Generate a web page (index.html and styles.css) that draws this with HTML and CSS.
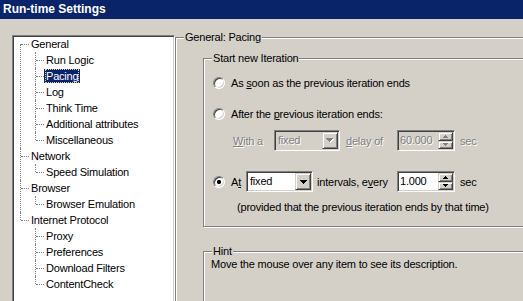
FILE: index.html
```html
<!DOCTYPE html>
<html lang="en">
<head>
    <meta charset="UTF-8">
    <meta name="viewport" content="width=device-width, initial-scale=1.0">
    <title>Run-time Settings</title>
    <link rel="stylesheet" href="styles.css">
</head>
<body>
    <div class="window">
        <div class="titlebar">Run-time Settings</div>

        <div class="client">
            <!-- Settings tree -->
            <ul class="tree">
                <li><span class="node">General</span>
                    <ul>
                        <li><span class="node">Run Logic</span></li>
                        <li><span class="node selected">Pacing</span></li>
                        <li><span class="node">Log</span></li>
                        <li><span class="node">Think Time</span></li>
                        <li><span class="node">Additional attributes</span></li>
                        <li><span class="node">Miscellaneous</span></li>
                    </ul>
                </li>
                <li><span class="node">Network</span>
                    <ul>
                        <li><span class="node">Speed Simulation</span></li>
                    </ul>
                </li>
                <li><span class="node">Browser</span>
                    <ul>
                        <li><span class="node">Browser Emulation</span></li>
                    </ul>
                </li>
                <li><span class="node">Internet Protocol</span>
                    <ul>
                        <li><span class="node">Proxy</span></li>
                        <li><span class="node">Preferences</span></li>
                        <li><span class="node">Download Filters</span></li>
                        <li><span class="node">ContentCheck</span></li>
                    </ul>
                </li>
            </ul>

            <!-- Pacing page -->
            <div class="group main-group">
                <div class="group-title">General: Pacing</div>

                <div class="group iter-group">
                    <div class="group-title">Start new Iteration</div>

                    <div class="row row-soon">
                        <span class="radio"></span>
                        <span>As <u>s</u>oon as the previous iteration ends</span>
                    </div>

                    <div class="row row-after">
                        <span class="radio"></span>
                        <span>After the <u>p</u>revious iteration ends:</span>
                    </div>

                    <div class="row row-delay disabled">
                        <span class="lbl-witha"><u>W</u>ith a</span>
                        <span class="combo combo-delay">
                            <span class="combo-text">fixed</span>
                            <span class="drop">
                                <svg width="8" height="5" viewBox="0 0 8 5"><path class="arrow-shadow" d="M1 1h7v1h-1v1h-1v1h-1v1h-1v-1h-1v-1h-1v-1h-1z"/><path class="arrow" d="M0 0h7v1h-1v1h-1v1h-1v1h-1v-1h-1v-1h-1v-1h-1z"/></svg>
                            </span>
                        </span>
                        <span class="lbl-delay"><u>d</u>elay of</span>
                        <span class="spin">
                            <span class="spin-text">60.000</span>
                            <span class="spin-btns">
                                <span class="spin-btn"><svg width="5" height="3" viewBox="0 0 5 3"><path class="arrow" d="M2 0h1v1h1v1h1v1h-5v-1h1v-1h1z"/></svg></span>
                                <span class="spin-btn"><svg width="5" height="3" viewBox="0 0 5 3"><path class="arrow" d="M0 0h5v1h-1v1h-1v1h-1v-1h-1v-1h-1z"/></svg></span>
                            </span>
                        </span>
                        <span class="lbl-sec">sec</span>
                    </div>

                    <div class="row row-at">
                        <span class="radio checked"></span>
                        <span class="lbl-at">A<u>t</u></span>
                        <span class="combo combo-at">
                            <span class="combo-text">fixed</span>
                            <span class="drop">
                                <svg width="7" height="4" viewBox="0 0 7 4"><path class="arrow" d="M0 0h7v1h-1v1h-1v1h-1v1h-1v-1h-1v-1h-1v-1h-1z"/></svg>
                            </span>
                        </span>
                        <span class="lbl-every">intervals, e<u>v</u>ery</span>
                        <span class="spin">
                            <span class="spin-text">1.000</span>
                            <span class="spin-btns">
                                <span class="spin-btn"><svg width="5" height="3" viewBox="0 0 5 3"><path class="arrow" d="M2 0h1v1h1v1h1v1h-5v-1h1v-1h1z"/></svg></span>
                                <span class="spin-btn"><svg width="5" height="3" viewBox="0 0 5 3"><path class="arrow" d="M0 0h5v1h-1v1h-1v1h-1v-1h-1v-1h-1z"/></svg></span>
                            </span>
                        </span>
                        <span class="lbl-sec">sec</span>
                    </div>

                    <div class="row row-note">(provided that the previous iteration ends by that time)</div>
                </div>

                <div class="group hint-group">
                    <div class="group-title">Hint</div>
                    <div class="hint-text">Move the mouse over any item to see its description.</div>
                </div>
            </div>
        </div>
    </div>
</body>
</html>
```

FILE: styles.css
```css
body {
    margin: 0;
    background-color: #d4d0c8;
    font-family: "Liberation Sans", Arial, sans-serif;
    font-size: 11px;
    letter-spacing: -0.2px;
    color: #000;
    overflow: hidden;
}
.window {
    width: 523px;
    height: 301px;
    overflow: hidden;
}
.titlebar {
    height: 19px;
    line-height: 19px;
    padding-left: 3px;
    background-color: #0a246a;
    color: #fff;
    font-weight: bold;
    font-size: 12px;
    letter-spacing: 0;
}
.client {
    display: flex;
    align-items: flex-start;
    padding-left: 12px;
}

/* Tree view */
.tree {
    list-style: none;
    margin: 16px 0 0;
    padding: 0 0 0 7px;
    width: 163px;
    height: 290px;
    box-sizing: border-box;
    flex: none;
    background-color: #fff;
    border: 1px solid;
    border-color: #808080 #fff #fff #808080;
    box-shadow: inset 1px 1px 0 #404040, inset -1px -1px 0 #d4d0c8;
}
.tree ul {
    list-style: none;
    margin: 0;
    padding: 0 0 0 15px;
}
.tree li {
    position: relative;
}
.tree li::before {
    content: "";
    position: absolute;
    left: 1px;
    top: 8px;
    width: 8px;
    border-top: 1px dotted #808080;
}
.tree li::after {
    content: "";
    position: absolute;
    left: 0;
    top: 0;
    bottom: 0;
    border-left: 1px dotted #808080;
}
.tree > li:first-child::after {
    top: 8px;
}
.tree li:last-child::after {
    bottom: auto;
    height: 8px;
}
.node {
    display: block;
    width: max-content;
    margin-left: 9px;
    padding: 0 2px;
    line-height: 14px;
    border-top: 1px solid transparent;
    border-bottom: 1px solid transparent;
    background-clip: padding-box;
    white-space: nowrap;
}
.node.selected {
    background-color: #0a246a;
    color: #fff;
    outline: 1px dotted #e8cc80;
    outline-offset: -2px;
}

/* Group boxes */
.group {
    border: 1px solid #808080;
    box-shadow: 1px 1px 0 #fff, inset 1px 1px 0 #fff;
}
.group-title {
    width: max-content;
    margin: -7px 0 0 8px;
    padding: 0 1px;
    line-height: 13px;
    background-color: #d4d0c8;
}
.main-group {
    margin-top: 18px;
    width: 380px;
    height: 300px;
    box-sizing: border-box;
    flex: none;
}
.iter-group {
    margin: 14px 0 0 27px;
    width: 330px;
    padding-bottom: 13px;
}
.hint-group {
    margin: 24px 0 0 27px;
    width: 330px;
    height: 100px;
}
.hint-text {
    padding-left: 7px;
    line-height: 13px;
}

/* Rows */
.row {
    display: flex;
    align-items: center;
    white-space: nowrap;
}
.row-soon {
    height: 16px;
    margin-top: 10px;
    padding-left: 9px;
}
.row-after {
    height: 16px;
    margin-top: 15px;
    padding-left: 9px;
}
.row-delay {
    height: 21px;
    margin-top: 8px;
    padding-left: 29px;
}
.row-at {
    height: 21px;
    margin-top: 20px;
    padding-left: 9px;
}
.row-note {
    height: 13px;
    margin-top: 8px;
    padding-left: 33px;
}
.disabled {
    color: #808080;
}
.disabled .lbl-witha,
.disabled .lbl-delay,
.disabled .lbl-sec,
.disabled .combo-text,
.disabled .spin-text {
    text-shadow: 1px 1px 0 #fff;
}
.lbl-witha {
    width: 41px;
}
.lbl-delay {
    width: 51px;
    margin-left: 6px;
}
.lbl-at {
    width: 15px;
}
.lbl-every {
    width: 80px;
    margin-left: 4px;
}
.lbl-sec {
    margin-left: 5px;
}

/* Radio buttons */
.radio {
    width: 12px;
    height: 12px;
    box-sizing: border-box;
    flex: none;
    margin-right: 6px;
    border-radius: 50%;
    background-color: #fff;
    border: 1px solid;
    border-color: #808080 #fff #fff #808080;
    box-shadow: inset 1px 1px 0 #404040, inset -1px -1px 0 #d4d0c8;
}
.radio.checked {
    background: radial-gradient(circle, #000 1.8px, #fff 2.4px);
}

/* Combo boxes and spin edits */
.combo,
.spin {
    display: flex;
    height: 21px;
    box-sizing: border-box;
    padding: 1px;
    background-color: #fff;
    border: 1px solid;
    border-color: #808080 #fff #fff #808080;
    box-shadow: inset 1px 1px 0 #404040, inset -1px -1px 0 #d4d0c8;
}
.disabled .combo,
.disabled .spin {
    background-color: #d4d0c8;
}
.combo-delay {
    width: 66px;
}
.combo-at {
    width: 67px;
}
.spin {
    width: 58px;
}
.combo-text,
.spin-text {
    flex: 1;
    padding-left: 2px;
    line-height: 17px;
}
.spin-text {
    padding-left: 1px;
}
.drop {
    width: 16px;
    box-sizing: border-box;
    display: flex;
    align-items: center;
    justify-content: center;
    background-color: #d4d0c8;
    border: 1px solid;
    border-color: #d4d0c8 #404040 #404040 #d4d0c8;
    box-shadow: inset 1px 1px 0 #fff, inset -1px -1px 0 #808080;
}
.drop svg,
.spin-btn svg {
    display: block;
    shape-rendering: crispEdges;
}
.arrow {
    fill: #000;
}
.arrow-shadow {
    fill: none;
}
.disabled .arrow {
    fill: #808080;
}
.disabled .arrow-shadow {
    fill: #fff;
}
.spin-btns {
    display: flex;
    flex-direction: column;
    width: 15px;
}
.spin-btn {
    flex: 1;
    display: flex;
    align-items: center;
    justify-content: center;
    box-sizing: border-box;
    background-color: #d4d0c8;
    border: 1px solid;
    border-color: #d4d0c8 #404040 #404040 #d4d0c8;
    box-shadow: inset 1px 1px 0 #fff, inset -1px -1px 0 #808080;
}
```
